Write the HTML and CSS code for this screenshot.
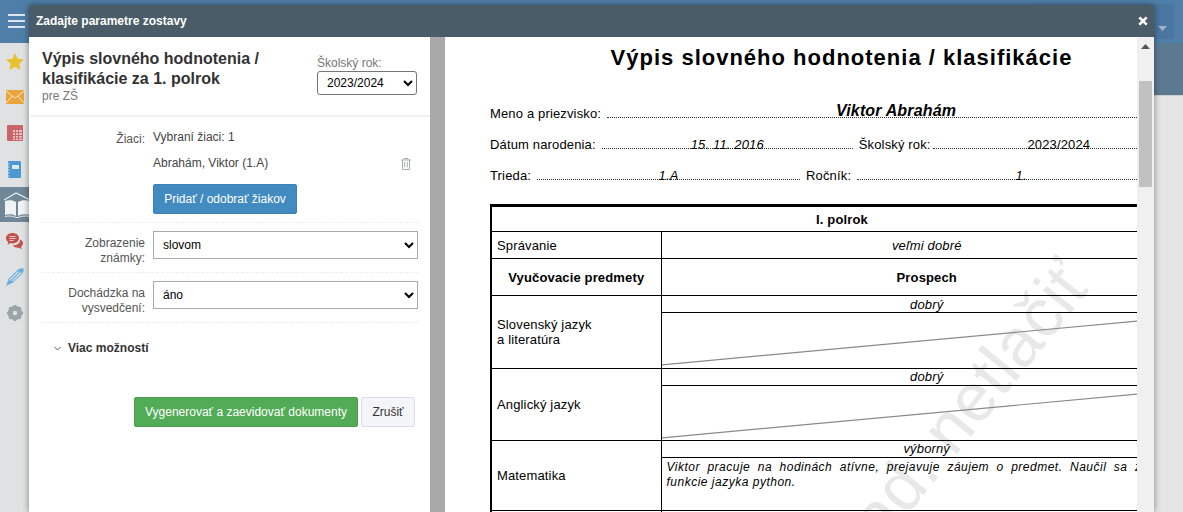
FILE: index.html
```html
<!doctype html>
<html lang="sk">
  <head>
    <meta charset="UTF-8" />
    <meta name="viewport" content="width=device-width, initial-scale=1.0" />
    <title>Zadajte parametre zostavy</title>
    <link rel="stylesheet" href="styles.css">
  </head>
  <body>
    <!-- Page behind the dialog -->
    <div class="topbar">
      <div class="burger"><span></span><span></span><span></span></div>
      <div class="top-menu"><svg width="9" height="5" viewBox="0 0 9 5"><path d="M0 0h9L4.500 5z" fill="#9fb4c6"/></svg></div>
    </div>
    <div class="main">
      <div class="sidebar">
        <div class="side-item">
          <svg width="18" height="17" viewBox="0 0 18 17"><path d="M9 0l2.700 5.800 6.300.7-4.700 4.200 1.300 6.300L9 13.900 3.400 17l1.300-6.300L0 6.500l6.300-.7z" fill="#e8c22f"/></svg>
        </div>
        <div class="side-item">
          <svg width="18" height="14" viewBox="0 0 18 14"><rect width="18" height="14" fill="#e9a53c"/><path d="M0 1l9 7 9-7M0 13l6-7M18 13l-6-7" fill="none" stroke="#f8e6c8" stroke-width="1"/></svg>
        </div>
        <div class="side-item">
          <svg width="16" height="16" viewBox="0 0 16 16"><rect width="16" height="16" rx="1" fill="#cb6466"/><path d="M6 5h9v10H6zM1 5h4M1 8h4M1 11h4" fill="#efd6d6" opacity=".85"/><path d="M8.500 4v12M11.500 4v12M5 7.500h11M5 10.500h11M5 13h11" stroke="#cb6466" stroke-width="1"/></svg>
        </div>
        <div class="side-item">
          <svg width="13" height="17" viewBox="0 0 13 17"><rect width="13" height="17" rx="1" fill="#4b98d2"/><rect x="4" y="4" width="7" height="4" fill="#dcebf6"/><path d="M0 3h1.500M0 6h1.500M0 9h1.500M0 12h1.500M0 15h1.500" stroke="#dcebf6"/></svg>
        </div>
        <div class="side-item side-active">
          <svg width="27" height="28" viewBox="0 0 27 28"><path d="M1 9L13 2l14 7" fill="none" stroke="#e8edf0" stroke-width="1.200"/><path d="M2 10c4-1.500 8-1 11 1v14c-3-2-7-2.500-11-1zM15 11c3-2 8-2.500 12-1v14c-4-1-9-1-12 1z" fill="#f0f2f3"/><path d="M2 25.500c4-1 8-.5 11 1h2c3-1.500 8-2 12-1" fill="none" stroke="#e8edf0"/></svg>
        </div>
        <div class="side-item">
          <svg width="17" height="17" viewBox="0 0 17 17"><path d="M6.500 0C10 0 13 2.200 13 5.200s-3 5.200-6.500 5.200c-.8 0-1.500-.1-2.200-.3L1.500 12l.7-3C.8 8 0 6.700 0 5.200 0 2.200 3 0 6.500 0z" fill="#c4504b"/><path d="M3.500 3.500h6M3.500 5.500h6M3.500 7.500h4" stroke="#f3dcdb" stroke-width=".9"/><path d="M14 6.500c1.900.8 3 2.200 3 3.800 0 1.300-.7 2.400-1.800 3.200l.6 2.800-2.800-1.600c-2.500.4-5-.4-6.300-2.400 3.800.3 7.800-2 7.300-5.800z" fill="#c4504b"/></svg>
        </div>
        <div class="side-item">
          <svg width="18" height="18" viewBox="0 0 18 18"><path d="M0 18l2.500-7L11 2.500C13 .5 16 0 17.500.5 18 2.500 17 5 15 7l-8 7.500z" fill="#6aaede"/><path d="M3.500 12.500L12.500 3.500M6.500 13L15 4.500" stroke="#e0e2e4" stroke-width="1.100"/></svg>
        </div>
        <div class="side-item">
          <svg width="16" height="16" viewBox="0 0 16 16"><circle cx="8" cy="8" r="5.500" fill="none" stroke="#9aa3a6" stroke-width="3.400"/><path d="M8 0v16M0 8h16M2.300 2.300l11.400 11.400M13.700 2.300L2.300 13.700" stroke="#9aa3a6" stroke-width="2.600"/><circle cx="8" cy="8" r="2.200" fill="#e0e1e3"/></svg>
        </div>
      </div>
      <div class="content">
        <div class="band"></div>
      </div>
    </div>

    <!-- Report dialog -->
    <div class="dialog">
      <div class="dialog-head">
        <span>Zadajte parametre zostavy</span>
        <svg class="close" width="10" height="10" viewBox="0 0 10 10"><path d="M1.300 1.300l7.400 7.400M8.700 1.300L1.300 8.700" stroke="#fff" stroke-width="2.600"/></svg>
      </div>
      <div class="dialog-body">
        <div class="form-pane">
          <div class="form-top">
            <div class="form-heading">
              <div class="form-title">Výpis slovného hodnotenia / klasifikácie za 1. polrok</div>
              <div class="form-sub">pre ZŠ</div>
            </div>
            <div class="year-box">
              <label>Školský rok:</label>
              <select class="year-select"><option>2023/2024</option></select>
            </div>
          </div>
          <div class="form-rows">
            <div class="row row-pupils">
              <div class="row-label">Žiaci:</div>
              <div class="row-value">
                <div class="pupil-count">Vybraní žiaci: 1</div>
                <div class="pupil-line">
                  <span>Abrahám, Viktor (1.A)</span>
                  <svg width="10" height="12" viewBox="0 0 10 12"><path d="M0 2h10M3 2V.5h4V2M1.500 2v9.500h7V2M3.700 4v5.500M6.300 4v5.500" fill="none" stroke="#a9adb0" stroke-width="1"/></svg>
                </div>
                <button class="btn btn-blue">Pridať / odobrať žiakov</button>
              </div>
            </div>
            <div class="row">
              <div class="row-label">Zobrazenie známky:</div>
              <div class="row-value"><select class="field"><option>slovom</option></select></div>
            </div>
            <div class="row">
              <div class="row-label">Dochádzka na vysvedčení:</div>
              <div class="row-value"><select class="field"><option>áno</option></select></div>
            </div>
          </div>
          <div class="more">
            <svg width="7" height="5" viewBox="0 0 7 5"><path d="M.5 1l3 3 3-3" fill="none" stroke="#555" stroke-width="1"/></svg>
            <span>Viac možností</span>
          </div>
          <div class="form-actions">
            <button class="btn btn-green">Vygenerovať a zaevidovať dokumenty</button>
            <button class="btn btn-plain">Zrušiť</button>
          </div>
        </div>
        <div class="splitter"></div>
        <div class="preview">
          <div class="doc">
            <div class="watermark">Náhľad. netlačiť</div>
            <div class="doc-title">Výpis slovného hodnotenia / klasifikácie</div>
            <div class="meta meta-first">
              <span class="meta-label">Meno a priezvisko:</span>
              <span class="dots"><b>Viktor Abrahám</b></span>
            </div>
            <div class="meta">
              <span class="meta-label">Dátum narodenia:</span>
              <span class="dots dots-birth"><i>15. 11. 2016</i></span>
              <span class="meta-label meta-tight">Školský rok:</span>
              <span class="dots"><span>2023/2024</span></span>
            </div>
            <div class="meta">
              <span class="meta-label">Trieda:</span>
              <span class="dots dots-class"><i>1.A</i></span>
              <span class="meta-label">Ročník:</span>
              <span class="dots"><i>1.</i></span>
            </div>
            <table class="grades">
              <colgroup><col class="col-subject"><col></colgroup>
              <tr class="h-26"><th colspan="2">I. polrok</th></tr>
              <tr class="h-27"><td>Správanie</td><td class="mark">veľmi dobré</td></tr>
              <tr class="h-37"><th>Vyučovacie predmety</th><th>Prospech</th></tr>
              <tr class="h-17"><td rowspan="2">Slovenský jazyk<br>a literatúra</td><td class="mark">dobrý</td></tr>
              <tr class="h-53"><td class="strike"><svg viewBox="0 0 532 55" preserveAspectRatio="none"><line x1="0" y1="52" x2="532" y2="3" stroke="#8a8a8a" stroke-width="1.200"/></svg></td></tr>
              <tr class="h-17"><td rowspan="2">Anglický jazyk</td><td class="mark">dobrý</td></tr>
              <tr class="h-52"><td class="strike"><svg viewBox="0 0 532 54" preserveAspectRatio="none"><line x1="0" y1="52" x2="532" y2="3" stroke="#8a8a8a" stroke-width="1.200"/></svg></td></tr>
              <tr class="h-17"><td rowspan="2">Matematika</td><td class="mark">výborný</td></tr>
              <tr class="h-53"><td class="note">Viktor pracuje na hodinách atívne, prejavuje záujem o predmet. Naučil sa základné funkcie jazyka python.</td></tr>
              <tr class="h-52"><td></td><td></td></tr>
            </table>
          </div>
        </div>
        <div class="scroll">
          <svg class="scroll-up" width="9" height="5" viewBox="0 0 9 5"><path d="M0 5h9L4.500 0z" fill="#555"/></svg>
          <div class="scroll-thumb"></div>
        </div>
      </div>
    </div>
  </body>
</html>
```

FILE: styles.css
```css
html,
body {
  height: 100%;
}

body {
  margin: 0;
  overflow: hidden;
  background-color: #e4e4e4;
  color: #333;
  font-family: "Liberation Sans", Arial, sans-serif;
  font-size: 12px;
}

/* Page behind the dialog */
.topbar {
  display: flex;
  justify-content: space-between;
  height: 43px;
  background-color: #4f7fa8;
}

.burger {
  display: flex;
  flex-direction: column;
  gap: 4px;
  width: 17px;
  margin: 14px 0 0 8px;
}

.burger span {
  height: 2px;
  background-color: #dbe6ef;
}

.top-menu {
  display: flex;
  justify-content: flex-end;
  align-items: flex-end;
  box-sizing: border-box;
  width: 144px;
  height: 35px;
  margin: 4px 9px 0 0;
  padding: 0 7px 8px 0;
  background-color: #4a76a0;
  border-radius: 3px;
}

.main {
  display: flex;
  height: 469px;
}

.sidebar {
  display: flex;
  flex-direction: column;
  flex: 0 0 30px;
  background-color: #e0e1e3;
}

.side-item {
  display: flex;
  justify-content: center;
  align-items: center;
  height: 36px;
  padding-right: 1px;
}

.side-active {
  justify-content: flex-end;
  height: 35px;
  margin-bottom: 1px;
  padding-right: 0;
  background-color: #6f8796;
}

.content {
  flex: 1;
}

.band {
  height: 52px;
  background-color: #5b7a92;
  border-bottom: 1px solid #cfcfcf;
}

/* Dialog */
.dialog {
  position: absolute;
  top: 5px;
  left: 29px;
  display: flex;
  flex-direction: column;
  width: 1125px;
  height: 507px;
  border-radius: 3px 3px 0 0;
  box-shadow: 0 0 6px rgba(0, 0, 0, 0.45);
}

.dialog-head {
  display: flex;
  justify-content: space-between;
  align-items: center;
  flex: 0 0 32px;
  padding: 0 8px 0 7px;
  background-color: #4a5c68;
  color: #fff;
  font-weight: bold;
  border-radius: 3px 3px 0 0;
}

.close {
  margin: 0 -2px 0 0;
}

.dialog-body {
  display: flex;
  flex: 1;
  min-height: 0;
  background-color: #fff;
}

.form-pane {
  box-sizing: border-box;
  flex: 0 0 401px;
  padding-left: 1px;
}

.splitter {
  flex: 0 0 15px;
  background-color: #a9a9a9;
}

/* Form on the left */
.form-top {
  display: flex;
  justify-content: space-between;
  box-sizing: border-box;
  height: 80px;
  padding: 12px 13px 0 12px;
  border-bottom: 2px solid #f1f1f1;
}

.form-heading {
  width: 250px;
}

.form-title {
  color: #333;
  font-size: 16px;
  font-weight: bold;
  line-height: 20px;
}

.form-sub {
  color: #777;
  font-size: 12px;
}

.year-box {
  width: 100px;
  margin-top: 7px;
}

.year-box label {
  display: block;
  color: #777;
  line-height: 15px;
}

.year-select {
  display: block;
  width: 100px;
  height: 24px;
  padding-left: 5px;
  background-color: #fff;
  border: 1px solid #767676;
  border-radius: 3px;
  color: #000;
  font-family: "Liberation Sans", Arial, sans-serif;
  font-size: 12px;
}

.form-rows {
  padding: 0 12px;
}

.row {
  display: flex;
  box-sizing: border-box;
  padding: 8px 0 12px;
  border-bottom: 1px dashed #eee;
}

.row-pupils {
  height: 106px;
  padding-top: 13px;
}

.row:nth-child(2),
.row:nth-child(3) {
  height: 50px;
}

.row:nth-child(2) .row-label,
.row:nth-child(3) .row-label {
  padding-top: 5px;
}

.row-label {
  flex: 0 0 103px;
  color: #555;
  padding-top: 2px;
  line-height: 15px;
  text-align: right;
}

.row-value {
  flex: 1;
  margin-left: 8px;
  min-width: 0;
}

.pupil-count {
  color: #444;
  line-height: 15px;
}

.pupil-line {
  display: flex;
  justify-content: space-between;
  align-items: center;
  margin-top: 11px;
  padding-right: 7px;
  color: #444;
  line-height: 15px;
}

.field {
  display: block;
  box-sizing: border-box;
  width: 265px;
  height: 28px;
  padding-left: 5px;
  background-color: #fff;
  border: 1px solid #aaa;
  color: #000;
  font-family: "Liberation Sans", Arial, sans-serif;
  font-size: 12px;
}

.more {
  display: flex;
  align-items: center;
  gap: 7px;
  margin: 18px 0 0 24px;
  color: #333;
  font-weight: bold;
  line-height: 15px;
}

.form-actions {
  display: flex;
  justify-content: flex-end;
  gap: 3px;
  margin-top: 41px;
  padding-right: 15px;
}

.btn {
  height: 30px;
  padding: 0;
  border: 1px solid transparent;
  border-radius: 2px;
  font-family: "Liberation Sans", Arial, sans-serif;
  font-size: 12px;
}

.btn-blue {
  width: 144px;
  margin-top: 13px;
  background-color: #428bc1;
  border-color: #3d80b3;
  color: #fff;
}

.btn-green {
  width: 224px;
  background-color: #52ab56;
  border-color: #4aa04e;
  color: #fff;
}

.btn-plain {
  width: 54px;
  background-color: #f4f5f9;
  border: 1px solid #dcdee6;
  color: #333;
}

/* Document preview */
.preview {
  position: relative;
  flex: 1;
  min-width: 0;
  overflow: hidden;
}

.doc {
  position: relative;
  width: 703px;
  margin-left: 45px;
  color: #000;
  font-size: 13px;
  letter-spacing: 0.15px;
}

.watermark {
  position: absolute;
  top: 188px;
  left: -215px;
  width: 800px;
  color: #e8e8e8;
  font-size: 68px;
  line-height: 90px;
  letter-spacing: 0;
  text-align: right;
  white-space: nowrap;
  transform: rotate(-51deg);
  transform-origin: right center;
}

.doc-title {
  position: relative;
  padding-top: 8px;
  font-size: 22px;
  font-weight: bold;
  letter-spacing: 1px;
  line-height: 26px;
  text-align: center;
}

.meta {
  position: relative;
  display: flex;
  align-items: flex-end;
  gap: 6px;
  width: 695px;
  height: 31px;
}

.meta-first {
  height: 49px;
}

.meta-label {
  flex: none;
  margin-bottom: -2px;
  line-height: 16px;
}

.meta-tight {
  margin-right: -4px;
}

.dots {
  flex: 1;
  min-width: 0;
  height: 11px;
  margin-bottom: 2px;
  padding-top: 4px;
  line-height: 16px;
  text-align: center;
  border-bottom: 1px dotted #333;
}

.dots b {
  position: relative;
  top: -3px;
  font-size: 16px;
  font-style: italic;
}

.dots-birth {
  flex: 0 0 251px;
}

.dots-class {
  flex: 0 0 263px;
}

.grades {
  position: relative;
  width: 703px;
  margin-top: 22px;
  border-collapse: collapse;
  border-top: 3px solid #000;
  border-left: 2px solid #000;
  table-layout: fixed;
}

.col-subject {
  width: 170px;
}

.grades th,
.grades td {
  padding: 0 5px;
  border: 1px solid #000;
  line-height: 15px;
}

.grades th {
  text-align: center;
}

.h-26 { height: 26px; }
.h-27 { height: 27px; }
.h-37 { height: 37px; }
.h-17 { height: 17px; }
.h-53 { height: 53px; }
.h-52 { height: 52px; }

.grades .mark {
  padding: 0;
  font-style: italic;
  text-align: center;
}

.grades .strike {
  padding: 0;
  line-height: 0;
}

.strike svg {
  display: block;
  width: 100%;
  height: 100%;
}

.grades .note {
  padding: 2px 5px;
  font-size: 12px;
  font-style: italic;
  letter-spacing: 0.5px;
  line-height: 15px;
  text-align: justify;
  vertical-align: top;
}

/* Scrollbar */
.scroll {
  display: flex;
  flex-direction: column;
  align-items: center;
  flex: 0 0 17px;
  background-color: #f0f0f0;
}

.scroll-up {
  margin-top: 7px;
}

.scroll-thumb {
  width: 13px;
  height: 106px;
  margin-top: 32px;
  background-color: #c1c1c1;
}
```
